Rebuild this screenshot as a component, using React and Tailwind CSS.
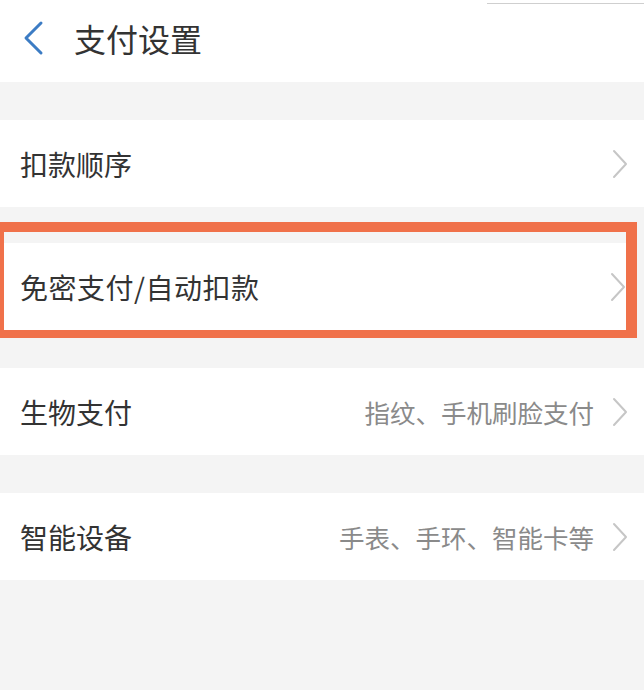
import React from 'react';

const font = { fontFamily: '"Noto Sans CJK SC", "Noto Sans", sans-serif' };

function Chevron() {
  return (
    <svg width="16" height="30" viewBox="0 0 16 30" className="shrink-0">
      <path d="M2 2 L14 15 L2 28" fill="none" stroke="#c6c6c6" strokeWidth="2" strokeLinecap="round" strokeLinejoin="round" />
    </svg>
  );
}

function Row({ label, value }) {
  return (
    <div className="h-[87px] bg-white flex items-center pl-[20px] pr-[16px]">
      <span className="text-[28px] leading-none text-[#333333]">{label}</span>
      <div className="ml-auto flex items-center gap-[18px]">
        {value && <span className="text-[25.5px] leading-none text-[#8a8a8a]">{value}</span>}
        <Chevron />
      </div>
    </div>
  );
}

export default function App() {
  return (
    <div className="min-h-[690px] bg-[#f4f4f4]" style={font}>
      {/* 顶部导航 */}
      <div className="relative h-[82px] bg-white flex items-center pl-[22px] pb-[7px]">
        <div className="absolute top-[3px] left-[487px] right-0 h-px bg-[#cfcfcf]" />
        <svg width="22" height="36" viewBox="0 0 22 36">
          <path d="M19 3 L4 18 L19 33" fill="none" stroke="#3c7cc4" strokeWidth="3" strokeLinecap="round" strokeLinejoin="round" />
        </svg>
        <h1 className="ml-[30px] text-[32px] leading-none text-[#333333]">支付设置</h1>
      </div>

      <div className="pt-[38px]">
        <Row label="扣款顺序" />
      </div>

      {/* 高亮框 */}
      <div className="mt-[15px] mr-[7px] border-[#f0714a] border-t-[10px] border-b-[8px] border-l-[4px] border-r-[11px]">
        <div className="h-[11px] bg-[#f4f4f4]" />
        <div className="h-[87px] bg-white flex items-center pl-[16px] pr-0">
          <span className="text-[28px] leading-none text-[#333333] tracking-[0.5px]">免密支付/自动扣款</span>
          <div className="ml-auto">
            <Chevron />
          </div>
        </div>
      </div>

      <div className="mt-[30px]">
        <Row label="生物支付" value="指纹、手机刷脸支付" />
      </div>
      <div className="mt-[38px]">
        <Row label="智能设备" value="手表、手环、智能卡等" />
      </div>
    </div>
  );
}
